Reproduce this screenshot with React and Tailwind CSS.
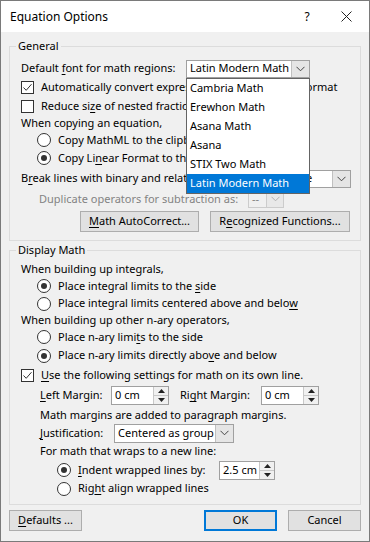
import React from "react";

const U = ({ children }) => <span className="underline underline-offset-[2px]">{children}</span>;

const Check = ({ checked }) => (
  <span className="w-[13px] h-[13px] border border-[#333] bg-white flex items-center justify-center shrink-0">
    {checked && (
      <svg width="11" height="11" viewBox="0 0 11 11">
        <path d="M1.5 5.5 L4.2 8.3 L9.5 2.2" fill="none" stroke="#333" strokeWidth="1" />
      </svg>
    )}
  </span>
);

const Radio = ({ on }) => (
  <span className="w-[14px] h-[14px] rounded-full border border-[#333] bg-white flex items-center justify-center shrink-0">
    {on && <span className="w-[6px] h-[6px] rounded-full bg-[#333]" />}
  </span>
);

const Chevron = ({ color = "#444" }) => (
  <svg width="9" height="6" viewBox="0 0 9 6">
    <path d="M0.5 0.8 L4.5 4.8 L8.5 0.8" fill="none" stroke={color} strokeWidth="1" />
  </svg>
);

const Combo = ({ value, className, disabled }) => (
  <div
    className={
      disabled
        ? "h-[17px] flex shrink-0 border border-[#cccccc] bg-[#f0f0f0] " + className
        : "h-[18px] flex shrink-0 border border-[#a0a0a0] bg-white " + className
    }
  >
    <div
      className={
        disabled
          ? "flex-1 pl-[3px] flex items-center whitespace-nowrap overflow-hidden text-[#838383]"
          : "flex-1 pl-[3px] flex items-center whitespace-nowrap overflow-hidden"
      }
    >
      {value}
    </div>
    <div
      className={
        disabled
          ? "w-[17px] flex items-center justify-center bg-[#e8e8e8] border-l border-[#cccccc]"
          : "w-[18px] flex items-center justify-center bg-[#e5e5e5] border-l border-[#c0c0c0]"
      }
    >
      <Chevron color={disabled ? "#b0b0b0" : "#444"} />
    </div>
  </div>
);

const Spin = ({ value, className }) => (
  <div className={"h-[19px] flex shrink-0 border border-[#a0a0a0] bg-white " + className}>
    <div className="flex-1 pl-[3px] flex items-center whitespace-nowrap">{value}</div>
    <div className="w-[15px] flex flex-col border-l border-[#c8c8c8] bg-[#f0f0f0]">
      <div className="flex-1 flex items-center justify-center border-b border-[#c8c8c8]">
        <svg width="7" height="4" viewBox="0 0 7 4"><path d="M0 4 L3.5 0 L7 4 Z" fill="#222" /></svg>
      </div>
      <div className="flex-1 flex items-center justify-center">
        <svg width="7" height="4" viewBox="0 0 7 4"><path d="M0 0 L3.5 4 L7 0 Z" fill="#222" /></svg>
      </div>
    </div>
  </div>
);

const Btn = ({ children, className }) => (
  <button className={"h-[21px] border border-[#adadad] bg-[#e1e1e1] flex items-center justify-center whitespace-nowrap " + className}>
    {children}
  </button>
);

const fonts = ["Cambria Math", "Erewhon Math", "Asana Math", "Asana", "STIX Two Math"];

export default function App() {
  return (
    <div className="w-[370px] h-[542px] border border-[#7a7a7a] flex flex-col text-[11px] text-black font-['Noto_Sans',sans-serif] overflow-hidden">
      {/* Title bar */}
      <div className="h-[31px] bg-white flex items-center pl-[9px] shrink-0 text-[12px]">
        <span className="flex-1">Equation Options</span>
        <span className="w-[20px] text-center mr-[24px]">?</span>
        <svg width="11" height="11" viewBox="0 0 11 11" className="mr-[17px]">
          <path d="M0.5 0.5 L10.5 10.5 M10.5 0.5 L0.5 10.5" stroke="#222" strokeWidth="1" />
        </svg>
      </div>

      <div className="flex-1 bg-[#f0f0f0] flex flex-col whitespace-nowrap">
        {/* General */}
        <fieldset className="mx-[8px] mt-[6px] border border-[#dcdcdc] pt-[5px] pb-[8px]">
          <legend className="ml-[6px] px-[2px] leading-[16px]">General</legend>
          <div className="pl-[11px]">
            <div className="h-[19px] flex items-center">
              <span className="w-[165px]">
                Default <U>f</U>ont for math regions:
              </span>
              <div className="relative">
                <Combo value="Latin Modern Math" className="w-[124px]" />
                <div className="absolute left-0 top-full w-[124px] border border-[#646464] bg-white z-10">
                  {fonts.map((f) => (
                    <div key={f} className="h-[19px] pl-[3px] flex items-center">
                      {f}
                    </div>
                  ))}
                  <div className="h-[19px] pl-[3px] flex items-center bg-[#0078d7] text-white">Latin Modern Math</div>
                </div>
              </div>
            </div>

            <div className="h-[19px] flex items-center">
              <Check checked />
              <span className="ml-[7px]">Automatically convert expressions to Professional Format</span>
            </div>
            <div className="h-[18px] flex items-center">
              <Check />
              <span className="ml-[7px]">
                Reduce si<U>z</U>e of nested fractions in display equations
              </span>
            </div>
            <div className="h-[16px] flex items-center">When copying an equation,</div>
            <div className="h-[18px] flex items-center pl-[16px]">
              <Radio />
              <span className="ml-[7px]">Copy MathML to the clipboard as plain text</span>
            </div>
            <div className="h-[18px] flex items-center pl-[16px]">
              <Radio on />
              <span className="ml-[7px]">
                Copy Li<U>n</U>ear Format to the clipboard as plain text
              </span>
            </div>

            <div className="h-[19px] mt-[2px] flex items-center">
              <span className="w-[253px]">
                B<U>r</U>eak lines with binary and relational operators:
              </span>
              <Combo value="Before" className="w-[77px]" />
            </div>
            <div className="h-[18px] mt-[2px] flex items-center">
              <span className="w-[209px] ml-[18px] text-[#838383]">Duplicate operators for subtraction as:</span>
              <Combo value="--" className="w-[36px]" disabled />
            </div>

            <div className="flex mt-[3px] ml-[59px] gap-[11px]">
              <Btn className="w-[119px]">
                <U>M</U>ath AutoCorrect...
              </Btn>
              <Btn className="w-[140px]">
                R<U>e</U>cognized Functions...
              </Btn>
            </div>
          </div>
        </fieldset>

        {/* Display Math */}
        <fieldset className="mx-[8px] mt-[1px] border border-[#dcdcdc] pt-[3px] pb-[6px]">
          <legend className="ml-[6px] px-[2px] leading-[16px]">Display Math</legend>
          <div className="pl-[11px]">
            <div className="h-[16px] flex items-center">When building up integrals,</div>
            <div className="h-[18px] flex items-center pl-[16px]">
              <Radio on />
              <span className="ml-[7px]">
                Place integral limits to the <U>s</U>ide
              </span>
            </div>
            <div className="h-[17px] flex items-center pl-[16px]">
              <Radio />
              <span className="ml-[7px]">
                Place integral limits centered above and belo<U>w</U>
              </span>
            </div>
            <div className="h-[16px] flex items-center">When building up other n-ary operators,</div>
            <div className="h-[18px] flex items-center pl-[16px]">
              <Radio />
              <span className="ml-[7px]">
                Place n-ary limi<U>t</U>s to the side
              </span>
            </div>
            <div className="h-[19px] flex items-center pl-[16px]">
              <Radio on />
              <span className="ml-[7px]">
                Place n-ary limits directly abo<U>v</U>e and below
              </span>
            </div>
            <div className="h-[20px] flex items-center">
              <Check checked />
              <span className="ml-[7px]">
                <U>U</U>se the following settings for math on its own line.
              </span>
            </div>

            <div className="h-[21px] flex items-center pl-[19px]">
              <span className="w-[71px]">
                <U>L</U>eft Margin:
              </span>
              <Spin value="0 cm" className="w-[58px]" />
              <span className="w-[81px] ml-[11px]">
                Ri<U>g</U>ht Margin:
              </span>
              <Spin value="0 cm" className="w-[58px]" />
            </div>
            <div className="h-[18px] flex items-center pl-[19px]">Math margins are added to paragraph margins.</div>
            <div className="h-[18px] flex items-center pl-[19px]">
              <span className="w-[74px]">
                <U>J</U>ustification:
              </span>
              <Combo value="Centered as group" className="w-[120px] h-[19px]" />
            </div>
            <div className="h-[19px] flex items-center pl-[19px]">For math that wraps to a new line:</div>
            <div className="h-[18px] flex items-center pl-[36px]">
              <Radio on />
              <span className="ml-[7px] w-[141px]">
                <U>I</U>ndent wrapped lines by:
              </span>
              <Spin value="2.5 cm" className="w-[56px]" />
            </div>
            <div className="h-[19px] flex items-center pl-[36px]">
              <Radio />
              <span className="ml-[7px]">
                Rig<U>h</U>t align wrapped lines
              </span>
            </div>
          </div>
        </fieldset>

        {/* Buttons */}
        <div className="flex mt-[5px] px-[8px]">
          <Btn className="w-[73px]">
            <U>D</U>efaults ...
          </Btn>
          <div className="flex-1" />
          <button className="w-[73px] h-[21px] border-2 border-[#0078d7] bg-[#e1e1e1] flex items-center justify-center">OK</button>
          <Btn className="w-[73px] ml-[11px]">Cancel</Btn>
        </div>
      </div>
    </div>
  );
}
